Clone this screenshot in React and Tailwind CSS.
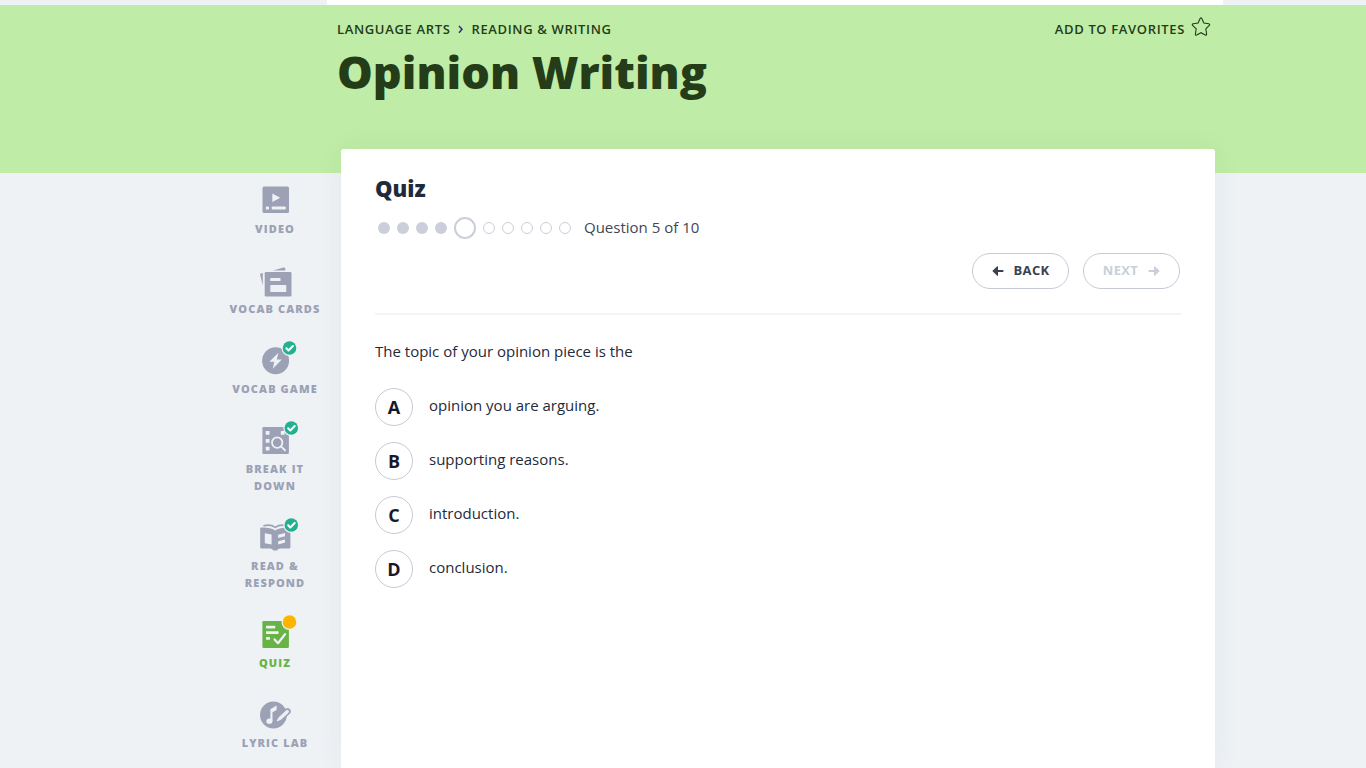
import React from "react";

const VideoIcon = () => (
  <>
    <rect x="3.5" y="-0.5" width="26.5" height="26.5" rx="1.5" fill="currentColor" />
    <path d="M13.3 6.4 21.2 10.7 13.3 15Z" fill="#eef2f5" />
    <rect x="6.8" y="19.4" width="3.2" height="3.2" rx="0.5" fill="#eef2f5" />
    <rect x="12.7" y="19.4" width="14" height="3.2" rx="0.8" fill="#eef2f5" />
  </>
);

const CardsIcon = () => (
  <>
    <path d="M14 3.6 24.6 0.4Q25.6 0.1 25.9 1L26.6 3.6Z" fill="currentColor" />
    <path d="M3.8 6 1.8 6.5Q0.9 6.7 1.1 7.7L3.8 18.5Z" fill="currentColor" />
    <rect x="5.7" y="5" width="26.8" height="24.4" rx="1.2" fill="currentColor" />
    <rect x="11.3" y="11" width="10.2" height="3" rx="0.5" fill="#eef2f5" />
    <rect x="11.3" y="18" width="16" height="7" rx="0.8" fill="#eef2f5" />
  </>
);

const GameIcon = () => (
  <>
    <circle cx="16.6" cy="13.7" r="13.5" fill="currentColor" />
    <path d="M19.4 5.8 10.4 14.8H15.3L13.8 21.8 22.8 12.6H17.8Z" fill="#eef2f5" />
  </>
);

const BreakIcon = () => (
  <>
    <rect x="3.4" y="0" width="26.5" height="27" rx="1.2" fill="currentColor" />
    <rect x="6.7" y="4" width="3.8" height="3.8" rx="0.5" fill="#eef2f5" />
    <rect x="6.7" y="12" width="3.8" height="3.8" rx="0.5" fill="#eef2f5" />
    <rect x="6.7" y="19.7" width="3.8" height="3.8" rx="0.5" fill="#eef2f5" />
    <rect x="21.8" y="4" width="3.8" height="3.8" rx="0.5" fill="#eef2f5" />
    <circle cx="18.2" cy="15.6" r="5.2" fill="none" stroke="#eef2f5" strokeWidth="1.8" />
    <path d="M22 19.4 26 23.3" stroke="#eef2f5" strokeWidth="1.9" strokeLinecap="round" />
  </>
);

const ReadIcon = () => (
  <>
    <path d="M5 1.8Q11.5 0 16.3 3.4 21 0 27.5 1.8" fill="none" stroke="currentColor" strokeWidth="1.6" strokeLinecap="round" />
    <path
      d="M1.2 4.8Q1.2 3.6 2.4 3.6 10.5 3.2 16.3 6.4 22 3.2 30.2 3.6 31.4 3.6 31.4 4.8V23.2Q31.4 24.4 30.2 24.4H21Q18.5 24.6 18 26.6H14.4Q13.8 24.6 11.4 24.4H2.4Q1.2 24.4 1.2 23.2Z"
      fill="currentColor"
    />
    <path d="M5.8 9.2 12.6 10.6V20.6L5.8 19.3Z" fill="#eef2f5" />
    <path d="M19.2 10.8 26 9V12.2L19.2 14ZM19.2 17.2 26 15.4V18.4L19.2 20.4Z" fill="#eef2f5" />
  </>
);

const QuizIcon = () => (
  <>
    <rect x="3.4" y="0" width="26.5" height="27" rx="1.2" fill="currentColor" />
    <rect x="7" y="4.7" width="9.2" height="2.7" rx="0.6" fill="#eef2f5" />
    <rect x="7" y="10.2" width="12.6" height="2.7" rx="0.6" fill="#eef2f5" />
    <rect x="7" y="16" width="4" height="2.8" rx="0.6" fill="#eef2f5" />
    <path d="M15.6 18.4 19 22.2 26 13.2" fill="none" stroke="#eef2f5" strokeWidth="2.2" strokeLinecap="round" strokeLinejoin="round" />
  </>
);

const LyricIcon = () => (
  <>
    <circle cx="14.4" cy="14" r="13.4" fill="currentColor" />
    <path d="M20 18 28.6 10.4" stroke="currentColor" strokeWidth="6.4" strokeLinecap="round" />
    <path d="M18 20 20 16.4 27.4 9.6Q28.6 8.8 29.4 9.8 30 10.8 29.1 11.7L21.8 18.4Z" fill="#eef2f5" stroke="#eef2f5" strokeWidth="0.8" strokeLinejoin="round" />
    <ellipse cx="10.4" cy="20.2" rx="3" ry="2.6" fill="#eef2f5" />
    <path d="M11.4 20V8.2L17.6 4.6V9L13.5 11.2V20Z" fill="#eef2f5" />
  </>
);

const navItems = [
  { title: "Video", icon: VideoIcon },
  { title: "Vocab Cards", icon: CardsIcon },
  { title: "Vocab Game", icon: GameIcon, badge: "done", badgeX: 30.5 },
  { title: "Break It Down", icon: BreakIcon, badge: "done", badgeX: 32.3 },
  { title: "Read & Respond", icon: ReadIcon, badge: "done", badgeX: 32.3 },
  { title: "Quiz", icon: QuizIcon, badge: "progress", badgeX: 30.5, active: true },
  { title: "Lyric Lab", icon: LyricIcon },
];

const answers = [
  { letter: "A", text: "opinion you are arguing." },
  { letter: "B", text: "supporting reasons." },
  { letter: "C", text: "introduction." },
  { letter: "D", text: "conclusion." },
];

const TOTAL = 10;
const CURRENT = 5;

function Badge({ type, x }) {
  return (
    <g transform={`translate(${x} 1)`}>
      <circle r="8" fill="#eef2f5" />
      <circle r="6.8" fill={type === "done" ? "#23b08f" : "#ffb400"} />
      {type === "done" && (
        <path d="M-3.1 0.3-1 2.4 3.4-2" fill="none" stroke="#fff" strokeWidth="2.1" strokeLinecap="round" strokeLinejoin="round" />
      )}
    </g>
  );
}

function Arrow({ className }) {
  return (
    <svg viewBox="0 0 12 10" className={className} fill="currentColor" aria-hidden="true">
      <path d="M0.3 5 5.2 0.3Q6 0 6 0.8V4H10.7Q11.6 4 11.6 5T10.7 6H6V9.2Q6 10 5.2 9.7Z" />
    </svg>
  );
}

function SideNav() {
  return (
    <nav className="w-[104px] shrink-0 pt-[14px]">
      <ul className="flex flex-col gap-[30px]">
        {navItems.map((item) => (
          <li key={item.title}>
            <a
              href="#"
              className={`flex flex-col items-center gap-[5px] ${item.active ? "text-[#68b345]" : "text-[#9ca1b5]"}`}
            >
              <svg viewBox="0 0 32 28" className="h-7 w-8 overflow-visible" aria-hidden="true">
                <item.icon />
                {item.badge && <Badge type={item.badge} x={item.badgeX} />}
              </svg>
              <span className="px-1 text-center text-[11px] leading-[17px] font-extrabold tracking-widest uppercase">
                {item.title}
              </span>
            </a>
          </li>
        ))}
      </ul>
    </nav>
  );
}

function Progress() {
  return (
    <div className="mt-3 flex items-center gap-[7px] pl-[3px]">
      {Array.from({ length: TOTAL }, (_, i) => i + 1).map((n) => (
        <span
          key={n}
          className={
            n < CURRENT
              ? "size-3 rounded-full bg-[#cacfda]"
              : n === CURRENT
                ? "size-[22px] rounded-full border-2 border-[#cacfda]"
                : "size-3 rounded-full border border-[#cacfda]"
          }
        />
      ))}
      <p className="ml-[6px] pb-[2px] text-[15px] leading-[22px] text-[#3f4656]">
        Question {CURRENT} of {TOTAL}
      </p>
    </div>
  );
}

export default function App() {
  return (
    <div className="flex min-h-screen flex-col bg-[#eef2f5] font-['Open_Sans',sans-serif] text-[#1f2a3a]">
      <div className="mx-auto w-full max-w-[1080px] pl-[184px]">
        <div className="h-[5px] bg-white" />
      </div>

      <header className="bg-[#bfeca6] pb-[70px] text-[#243c18]">
        <div className="mx-auto max-w-[1080px] pl-[184px]">
          <div className="flex items-center justify-between pt-3 pr-3 pl-[10px]">
            <div className="flex items-center gap-2 text-[13px] leading-6 font-semibold tracking-wider uppercase">
              <a href="#">Language Arts</a>
              <svg viewBox="0 0 5 9" className="h-[9px] w-[5px]" aria-hidden="true">
                <path d="M1 1 4 4.3 1 7.8" fill="none" stroke="#2b2f6b" strokeWidth="1.5" />
              </svg>
              <a href="#">Reading &amp; Writing</a>
            </div>
            <button
              type="button"
              className="flex items-center gap-[6px] text-[13px] leading-6 font-semibold tracking-wider uppercase"
            >
              Add to favorites
              <svg viewBox="0 0 20 20" className="mb-1 size-5" aria-hidden="true">
                <path
                  d="M9.1 1.5Q10 0.3 10.8 1.5L12.8 6 17.8 6.7Q19.3 7.1 18.3 8.3L14.8 11.9 15.6 17Q15.7 18.6 14.2 18L10 15.7 5.7 18Q4.3 18.6 4.4 17L5.2 11.9 1.6 8.3Q0.7 7.1 2.2 6.7L7.1 6Z"
                  fill="none"
                  stroke="currentColor"
                  strokeWidth="1.1"
                />
              </svg>
            </button>
          </div>
          <h1 className="px-[10px] text-[45px] leading-[62px] font-extrabold">Opinion Writing</h1>
        </div>
      </header>

      <div className="mx-auto flex w-full max-w-[1080px] flex-1 pl-20">
        <SideNav />
        <main className="-mt-6 mr-2 ml-[14px] flex-1 rounded-t-[3px] bg-white px-[34px] pt-[23px] shadow-[0_0_30px_rgba(40,50,70,0.05)]">
          <h2 className="text-[22px] leading-8 font-extrabold">Quiz</h2>
          <Progress />
          <div className="mt-[13px] flex justify-end gap-[14px] border-b-2 border-[#f3f4f6] pr-px pb-6">
            <button
              type="button"
              className="flex h-9 w-[97px] items-center justify-center gap-[10px] rounded-full border border-[#c6cad6] text-[13px] font-bold tracking-wide text-[#3a4152]"
            >
              <Arrow className="h-[10px] w-3" />
              BACK
            </button>
            <button
              type="button"
              disabled
              className="flex h-9 w-[97px] items-center justify-center gap-[10px] rounded-full border border-[#c6cad6] text-[13px] font-bold tracking-wide text-[#cacfda]"
            >
              NEXT
              <Arrow className="h-[10px] w-3 rotate-180" />
            </button>
          </div>

          <p className="mt-6 text-[15px] leading-6">The topic of your opinion piece is the</p>
          <ul className="mt-[25px] flex flex-col gap-4 pb-10">
            {answers.map((a) => (
              <li key={a.letter}>
                <button type="button" className="flex w-full items-center gap-4 text-left">
                  <span className="flex size-[38px] items-center justify-center rounded-full border border-[#c6cad6] text-lg font-bold text-[#191828]">
                    {a.letter}
                  </span>
                  <span className="pb-1 text-[15px] leading-6">{a.text}</span>
                </button>
              </li>
            ))}
          </ul>
        </main>
      </div>
    </div>
  );
}
